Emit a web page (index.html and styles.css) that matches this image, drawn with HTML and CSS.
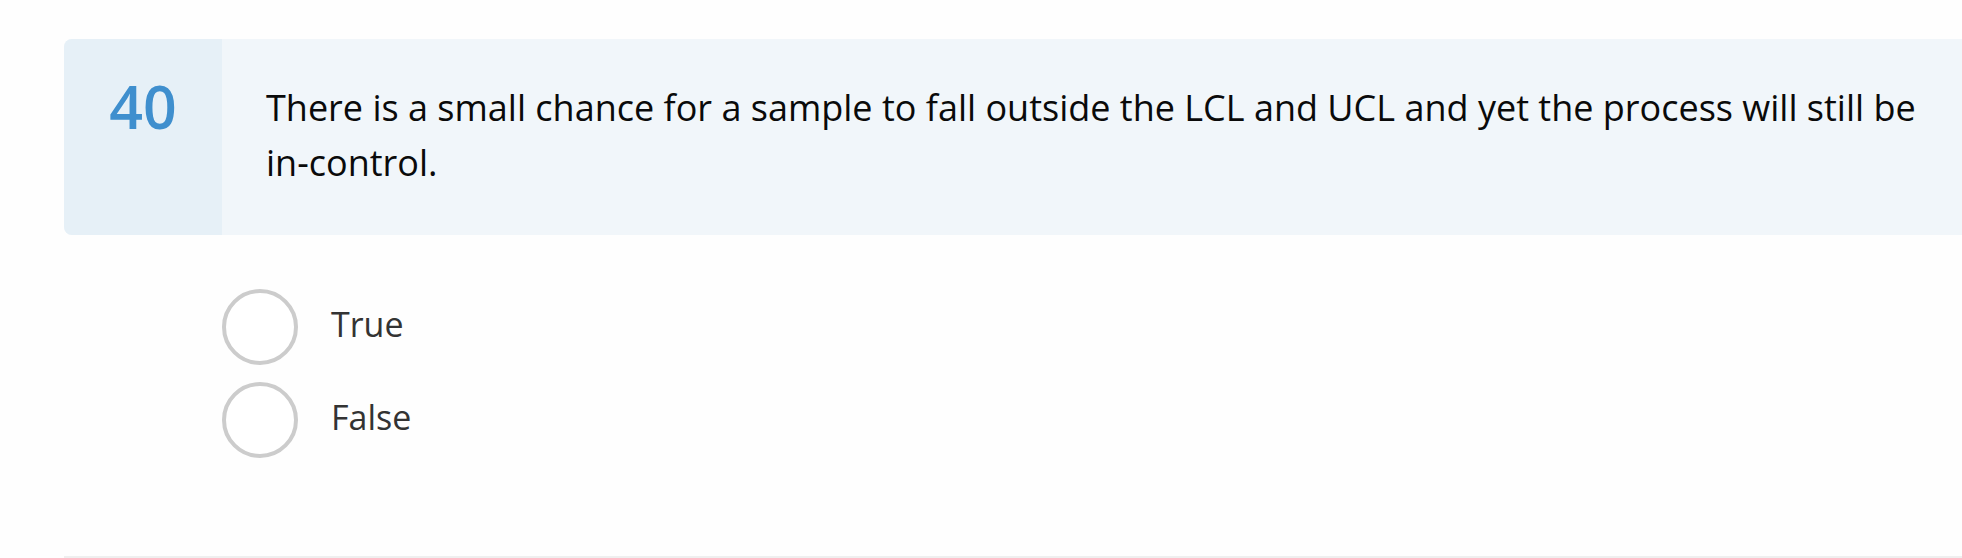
FILE: index.html
```html
<!DOCTYPE html>
<html lang="en">
<head>
<meta charset="utf-8">
<title>Question 40</title>
<link rel="stylesheet" href="styles.css">
</head>
<body>
<div class="page">
  <div class="question">
    <div class="q-head">
      <div class="q-num">40</div>
      <div class="q-text">There is a small chance for a sample to fall outside the LCL and UCL and yet the process will still be in-control.</div>
    </div>
    <ul class="options">
      <li class="option"><span class="radio"></span><span class="label">True</span></li>
      <li class="option"><span class="radio"></span><span class="label">False</span></li>
    </ul>
  </div>
</div>
</body>
</html>
```

FILE: styles.css
```css
html, body {
  margin: 0;
  padding: 0;
  background: #fefefe;
}
body {
  font-family: "Open Sans", "Noto Sans", sans-serif;
  overflow: hidden;
}
.page {
  padding: 39px 0 0 64px;
}
.question {
  border-bottom: 2px solid #efefef;
  padding-bottom: 98px;
}
.q-head {
  display: flex;
  height: 196px;
  border-radius: 8px 0 0 8px;
  overflow: hidden;
  background: #f1f6fa;
}
.q-num {
  flex: 0 0 158px;
  background: #e6f0f7;
  color: #3f8fce;
  font-size: 59px;
  font-weight: 600;
  line-height: 60px;
  text-align: center;
  padding-top: 37px;
  box-sizing: border-box;
}
.q-text {
  flex: 1;
  padding: 41px 20px 0 44px;
  font-size: 36px;
  line-height: 55px;
  color: #0a0a0a;
}
.options {
  list-style: none;
  margin: 54px 0 0 0;
  padding: 0 0 0 158px;
  display: flex;
  flex-direction: column;
  gap: 17px;
}
.option {
  display: flex;
  align-items: flex-start;
  gap: 33px;
}
.radio {
  width: 76px;
  height: 76px;
  box-sizing: border-box;
  border: 4px solid #cccccc;
  border-radius: 50%;
  background: #ffffff;
  flex: 0 0 auto;
}
.label {
  font-size: 34px;
  line-height: 70px;
  color: #333333;
}
```
